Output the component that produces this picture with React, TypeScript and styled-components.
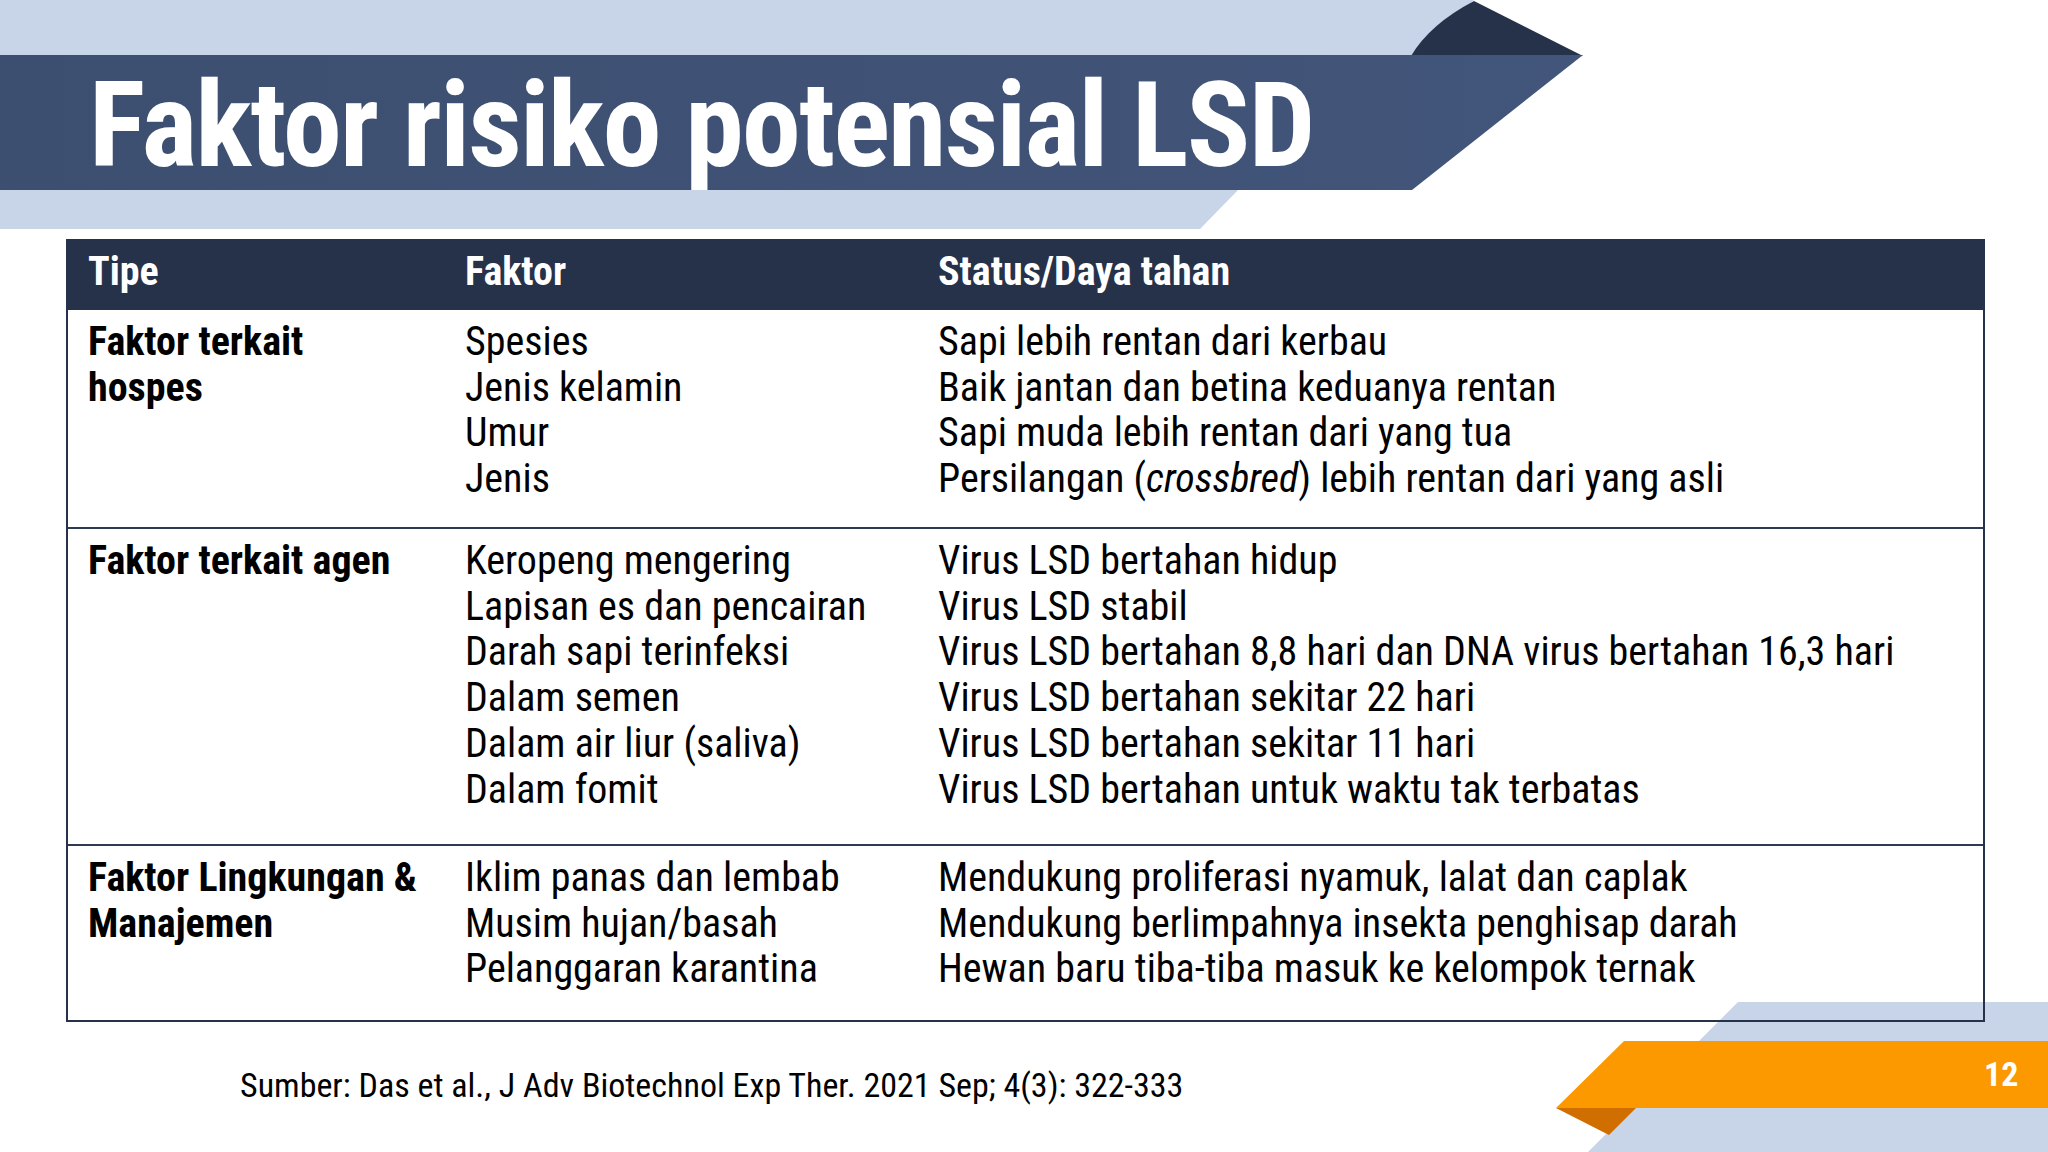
import React from 'react';
import styled, { createGlobalStyle } from 'styled-components';

const GlobalStyle = createGlobalStyle`
  html, body {
    margin: 0;
    padding: 0;
    background: #ffffff;
  }
  body {
    font-family: 'Roboto Condensed', Roboto, 'Liberation Sans', sans-serif;
  }
`;

const Slide = styled.div`
  position: relative;
  width: 2048px;
  height: 1152px;
  overflow: hidden;
  background: #ffffff;
  font-family: 'Roboto Condensed', Roboto, 'Liberation Sans', sans-serif;
`;

const Decor = styled.svg`
  position: absolute;
  inset: 0;
  z-index: 0;
`;

const Content = styled.div`
  position: relative;
  z-index: 1;
  display: flex;
  flex-direction: column;
`;

const TitleBar = styled.header`
  height: 229px;
  padding: 67px 0 0 89px;
  box-sizing: border-box;
`;

const Title = styled.h1`
  margin: 0;
  font-size: 118px;
  line-height: 1;
  font-weight: 700;
  color: #ffffff;
  letter-spacing: -1.7px;
`;

const Table = styled.div`
  margin: 10px 0 0 66px;
  width: 1919px;
  border: 2px solid #26324a;
  border-top: none;
  box-sizing: border-box;
  display: grid;
  grid-template-columns: 375px 473px 1fr;
`;

const HeadCell = styled.div<{ $first?: boolean }>`
  background: #26314a;
  color: #ffffff;
  height: 71px;
  box-sizing: border-box;
  padding: 10px 22px 0 ${({ $first }) => ($first ? 20 : 22)}px;
  font-size: 40px;
  line-height: 45.7px;
  font-weight: 700;
`;

const Cell = styled.div<{ $height: number; $bold?: boolean; $last?: boolean }>`
  height: ${({ $height }) => $height}px;
  box-sizing: border-box;
  padding: 9px 22px 0 ${({ $bold }) => ($bold ? 20 : 22)}px;
  border-bottom: ${({ $last }) => ($last ? 'none' : '2px solid #2e3a52')};
  color: #000000;
  font-size: 40px;
  line-height: 45.7px;
  font-weight: ${({ $bold }) => ($bold ? 700 : 400)};
`;

const Line = styled.div`
  white-space: nowrap;
`;

const Footer = styled.footer`
  margin: 43px 0 0 240px;
  font-size: 34px;
  line-height: 40px;
  color: #000000;
`;

const PageNumber = styled.div`
  position: absolute;
  z-index: 2;
  left: 1984px;
  top: 1054px;
  font-size: 34px;
  line-height: 40px;
  font-weight: 700;
  color: #ffffff;
`;

type Row = {
  type: string;
  height: number;
  factors: React.ReactNode[];
  status: React.ReactNode[];
};

const rows: Row[] = [
  {
    type: 'Faktor terkait hospes',
    height: 219,
    factors: ['Spesies', 'Jenis kelamin', 'Umur', 'Jenis'],
    status: [
      'Sapi lebih rentan dari kerbau',
      'Baik jantan dan betina keduanya rentan',
      'Sapi muda lebih rentan dari yang tua',
      <>
        Persilangan (<i>crossbred</i>) lebih rentan dari yang asli
      </>,
    ],
  },
  {
    type: 'Faktor terkait agen',
    height: 317,
    factors: [
      'Keropeng mengering',
      'Lapisan es dan pencairan',
      'Darah sapi terinfeksi',
      'Dalam semen',
      'Dalam air liur (saliva)',
      'Dalam fomit',
    ],
    status: [
      'Virus LSD bertahan hidup',
      'Virus LSD stabil',
      'Virus LSD bertahan 8,8 hari dan DNA virus bertahan 16,3 hari',
      'Virus LSD bertahan sekitar 22 hari',
      'Virus LSD bertahan sekitar 11 hari',
      'Virus LSD bertahan untuk waktu tak terbatas',
    ],
  },
  {
    type: 'Faktor Lingkungan & Manajemen',
    height: 174,
    factors: ['Iklim panas dan lembab', 'Musim hujan/basah', 'Pelanggaran karantina'],
    status: [
      'Mendukung proliferasi nyamuk, lalat dan caplak',
      'Mendukung berlimpahnya insekta penghisap darah',
      'Hewan baru tiba-tiba masuk ke kelompok ternak',
    ],
  },
];

export default function App() {
  return (
    <>
      <GlobalStyle />
      <Slide>
        <Decor width={2048} height={1152} viewBox="0 0 2048 1152">
          <defs>
            <linearGradient id="band" x1="0" y1="0" x2="1" y2="0">
              <stop offset="0" stopColor="#3c4f70" />
              <stop offset="1" stopColor="#42557a" />
            </linearGradient>
          </defs>
          <polygon points="0,0 1474,0 1411,56 0,56" fill="#c8d4e7" />
          <polygon points="0,188 1240,188 1200,229 0,229" fill="#c8d4e7" />
          <path d="M1474,1 L1583,56 L1411,56 Q1430,24 1474,1 Z" fill="#26314a" />
          <polygon points="0,55 1583,55 1412,190 0,190" fill="url(#band)" />
          <polygon points="1738,1002 2048,1002 2048,1152 1588,1152" fill="#c8d4e7" />
          <polygon points="1624,1041 2048,1041 2048,1108 1556,1108" fill="#fd9900" />
          <polygon points="1556,1108 1636,1108 1609,1135" fill="#d06e00" />
        </Decor>
        <Content>
          <TitleBar>
            <Title>Faktor risiko potensial LSD</Title>
          </TitleBar>
          <Table>
            <HeadCell $first>Tipe</HeadCell>
            <HeadCell>Faktor</HeadCell>
            <HeadCell>Status/Daya tahan</HeadCell>
            {rows.map((row, i) => {
              const last = i === rows.length - 1;
              return (
                <React.Fragment key={row.type}>
                  <Cell $height={row.height} $bold $last={last}>
                    {row.type}
                  </Cell>
                  <Cell $height={row.height} $last={last}>
                    {row.factors.map((f, j) => (
                      <Line key={j}>{f}</Line>
                    ))}
                  </Cell>
                  <Cell $height={row.height} $last={last}>
                    {row.status.map((s, j) => (
                      <Line key={j}>{s}</Line>
                    ))}
                  </Cell>
                </React.Fragment>
              );
            })}
          </Table>
          <Footer>Sumber: Das et al., J Adv Biotechnol Exp Ther. 2021 Sep; 4(3): 322-333</Footer>
        </Content>
        <PageNumber>12</PageNumber>
      </Slide>
    </>
  );
}
